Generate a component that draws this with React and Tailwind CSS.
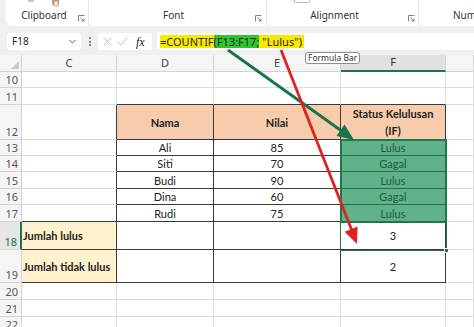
import React from 'react';

const UI_FONT = { fontFamily: '"Noto Sans", "Open Sans", sans-serif' };
const CELL_FONT = { fontFamily: 'Lato, "Open Sans", sans-serif' };

const rows = [
  { n: 10 }, { n: 11 }, { n: 12 }, { n: 13 }, { n: 14 }, { n: 15 }, { n: 16 },
  { n: 17 }, { n: 18 }, { n: 19 }, { n: 20 }, { n: 21 }, { n: 22 },
];

const cols = ['C', 'D', 'E', 'F', 'G'];

const data = {
  13: ['Ali', '85', 'Lulus'],
  14: ['Siti', '70', 'Gagal'],
  15: ['Budi', '90', 'Lulus'],
  16: ['Dina', '60', 'Gagal'],
  17: ['Rudi', '75', 'Lulus'],
};

function Launcher() {
  return (
    <svg width="7" height="7" viewBox="0 0 7 7" className="text-[#666]">
      <path d="M0.5 6.5V0.5H6.5" fill="none" stroke="currentColor" strokeWidth="0.8" />
      <path d="M2.5 2.5L6 6M6 3.5V6H3.5" fill="none" stroke="currentColor" strokeWidth="0.8" />
    </svg>
  );
}

function Ribbon() {
  return (
    <div className="h-[27px] bg-[#f0f0f0]">
      <div className="ml-[6px] h-[26px] bg-white rounded-bl-[6px] flex text-[10px] text-[#333]" style={UI_FONT}>
        <div className="w-[83px] relative flex items-end justify-center pb-[3px] border-r border-[#e6e6e6]">
          <svg width="40" height="8" viewBox="0 0 40 8" className="absolute top-0 left-[20px]">
            <rect x="2" y="-2" width="6" height="4" rx="1" fill="#c8c8c8" />
            <rect x="26" y="-2" width="7" height="7" rx="1" fill="#d9a066" />
            <rect x="28" y="1" width="4" height="5" fill="#f3f3f3" stroke="#888" strokeWidth="0.6" />
          </svg>
          <span className="pl-[4px] pr-[10px]">Clipboard</span>
          <span className="absolute right-[3px] bottom-[4px]"><Launcher /></span>
        </div>
        <div className="w-[178px] relative flex items-end justify-center pb-[3px] border-r border-[#e6e6e6]">
          <span className="pr-[8px]">Font</span>
          <span className="absolute right-[4px] bottom-[4px]"><Launcher /></span>
        </div>
        <div className="w-[152px] relative flex items-end justify-center pb-[3px] border-r border-[#e6e6e6]">
          <div className="absolute top-0 left-[27px] w-[16px] h-[3px] border border-t-0 border-[#bbb] rounded-b-[2px]" />
          <span className="pr-[16px]">Alignment</span>
          <span className="absolute right-[3px] bottom-[4px]"><Launcher /></span>
        </div>
        <div className="flex-1 min-w-0 flex items-end pb-[3px] pl-[34px] whitespace-nowrap">
          <span>Number</span>
        </div>
      </div>
    </div>
  );
}

function FormulaBar() {
  return (
    <div className="h-[28px] bg-[#f0f0f0] flex items-start pt-[6px] pl-[7px]" style={UI_FONT}>
      <div className="w-[74px] h-[17px] bg-white rounded-[3px] flex items-center justify-between px-[5px] text-[10px] text-[#222]">
        <span>F18</span>
        <svg width="7" height="5" viewBox="0 0 7 5">
          <path d="M0.5 1L3.5 4L6.5 1" fill="none" stroke="#555" strokeWidth="1" />
        </svg>
      </div>
      <div className="w-[17px] h-[17px] flex flex-col items-center justify-center gap-[1.5px]">
        <span className="w-[2px] h-[2px] bg-[#666] rounded-full" />
        <span className="w-[2px] h-[2px] bg-[#666] rounded-full" />
        <span className="w-[2px] h-[2px] bg-[#666] rounded-full" />
      </div>
      <div className="w-[54px] h-[17px] bg-white rounded-[3px] flex items-center px-[5px] gap-[5px]">
        <svg width="9" height="9" viewBox="0 0 9 9">
          <path d="M0.5 0.5L8.5 8.5M8.5 0.5L0.5 8.5" stroke="#c4c4c4" strokeWidth="1" />
        </svg>
        <svg width="11" height="9" viewBox="0 0 11 9">
          <path d="M0.5 4.5L4 8L10.5 0.5" fill="none" stroke="#c4c4c4" strokeWidth="1" />
        </svg>
        <span className="ml-[3px] text-[12px] italic text-[#222] leading-none" style={{ fontFamily: '"Liberation Serif", serif' }}>fx</span>
      </div>
      <div className="ml-[5px] flex-1 h-[17px] bg-white rounded-l-[3px] flex items-center pl-[3px] text-[11px] text-[#2a2a2a] whitespace-pre">
        <span className="bg-[#f7ea00] leading-[13px]">=COUNTIF</span>
        <span className="bg-[#2ec52e] leading-[13px]">(F13:F17;</span>
        <span className="bg-[#f7ea00] leading-[13px] pr-[2px]">{'\u00a0"Lulus")'}</span>
      </div>
    </div>
  );
}

function cellInfo(r, c) {
  const inTable = r >= 12 && r <= 19;
  const dfCol = c === 'D' || c === 'E' || c === 'F';
  const darkRight = inTable && (c === 'C' || dfCol);
  const darkBottom = (dfCol && r >= 11 && r <= 19) || (c === 'C' && r >= 17 && r <= 19);
  let bg = 'bg-white';
  let text = '';
  let extra = 'justify-center';
  let color = 'text-[#222]';
  let weight = '';
  let bottom = darkBottom ? 'border-b-[#3a3a3a]' : 'border-b-[#dcdcdc]';

  if (r === 12 && dfCol) {
    bg = 'bg-[#f8cbad]';
    weight = 'font-bold';
    text = c === 'D' ? 'Nama' : c === 'E' ? 'Nilai' : 'Status Kelulusan\n(IF)';
  }
  if (data[r] && dfCol) {
    const i = c === 'D' ? 0 : c === 'E' ? 1 : 2;
    text = data[r][i];
    if (c === 'F') {
      bg = 'bg-[#5fb28a]';
      color = 'text-[#1c5c3b]';
      bottom = 'border-b-[#236f48]';
    }
  }
  if ((r === 18 || r === 19) && c === 'C') {
    bg = 'bg-[#fff2cc]';
    weight = 'font-bold';
    extra = 'justify-start pl-[1px]';
    text = r === 18 ? 'Jumlah lulus' : 'Jumlah tidak lulus';
  }
  if (c === 'F' && r === 18) text = '3';
  if (c === 'F' && r === 19) text = '2';

  const right = darkRight ? 'border-r-[#3a3a3a]' : 'border-r-[#dcdcdc]';
  return { cls: `${bg} ${right} ${bottom} ${extra} ${color} ${weight}`, text };
}

function Sheet() {
  return (
    <div className="grid grid-cols-[22px_95px_97px_127px_105px_1fr] grid-rows-[17px_16px_17px_35px_16px_16px_17px_16px_17px_28px_33px_17px_17px_16px] bg-white">
      <div className="bg-[#f5f5f5] border-r border-b border-[#d4d4d4] relative">
        <svg width="8" height="8" viewBox="0 0 8 8" className="absolute right-[2px] bottom-[2px]">
          <path d="M8 0V8H0Z" fill="#c8c8c8" />
        </svg>
      </div>
      {cols.map((c) => (
        <div
          key={c}
          className={
            c === 'F'
              ? 'bg-[#e1e1e1] border-r border-r-[#d4d4d4] border-b-2 border-b-[#217346] flex items-center justify-center text-[11px] text-[#333]'
              : 'bg-[#f5f5f5] border-r border-b border-[#d4d4d4] flex items-center justify-center text-[11px] text-[#444]'
          }
          style={UI_FONT}
        >
          {c === 'G' ? '' : c}
        </div>
      ))}
      {rows.map((row) => (
        <React.Fragment key={row.n}>
          <div
            className={
              row.n === 18
                ? 'bg-[#e6e6e6] border-r-2 border-r-[#217346] border-b border-b-[#d4d4d4] flex items-end justify-end pr-[3px] text-[11px] text-[#217346] leading-[15px]'
                : 'bg-[#f5f5f5] border-r border-b border-[#d4d4d4] flex items-end justify-end pr-[3px] text-[11px] text-[#555] leading-[15px]'
            }
            style={UI_FONT}
          >
            {row.n}
          </div>
          {cols.map((c) => {
            const { cls, text } = cellInfo(row.n, c);
            return (
              <div
                key={c}
                className={`border-r border-b flex items-center text-center whitespace-pre-line text-[11px] leading-[17px] overflow-hidden ${cls}`}
                style={CELL_FONT}
              >
                {text}
              </div>
            );
          })}
        </React.Fragment>
      ))}
    </div>
  );
}

function Arrows() {
  return (
    <svg width="474" height="327" viewBox="0 0 474 327" className="absolute inset-0 pointer-events-none">
      <line x1="228" y1="50" x2="341" y2="130.5" stroke="#1a7449" strokeWidth="2.8" />
      <polygon points="354,140 336.5,136 344.5,124.5" fill="#1a7449" />
      <line x1="281" y1="50" x2="351.5" y2="229.5" stroke="#e0221f" strokeWidth="2.8" />
      <polygon points="357,244 344.6,231.8 357.6,226.5" fill="#e0221f" />
    </svg>
  );
}

export default function App() {
  return (
    <div className="relative w-[474px] h-[327px] overflow-hidden bg-white">
      <Ribbon />
      <FormulaBar />
      <Sheet />
      {/* F13:F17 range highlight */}
      <div className="absolute left-[340px] top-[139px] w-[107px] h-[84px] border-[2.5px] border-[#1f7a4a] pointer-events-none" />
      {/* active cell F18 */}
      <div className="absolute left-[340px] top-[222px] w-[107px] h-[29px] border-[1.5px] border-[#217346] pointer-events-none" />
      <div className="absolute left-[444px] top-[248px] w-[5px] h-[5px] bg-[#217346] border border-white pointer-events-none" />
      <Arrows />
      <div
        className="absolute left-[305px] top-[52px] h-[12px] px-[2px] bg-white border border-[#8a8a8a] rounded-[3px] text-[8.5px] leading-[10px] text-[#333]"
        style={UI_FONT}
      >
        Formula Bar
      </div>
    </div>
  );
}
